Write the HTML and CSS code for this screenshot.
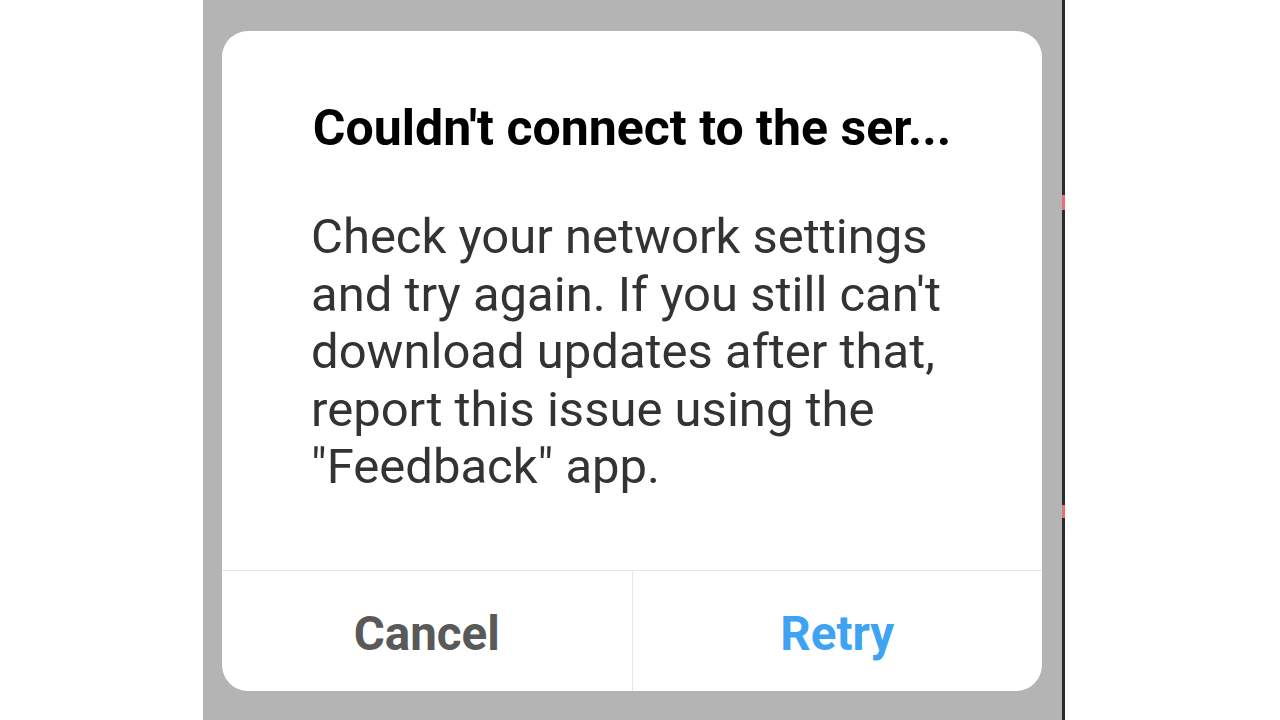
FILE: index.html
```html
<!DOCTYPE html>
<html lang="en">
<head>
<meta charset="utf-8">
<title>Couldn't connect</title>
<link rel="stylesheet" href="styles.css">
</head>
<body>
<div class="screen">
  <div class="margin-left"></div>
  <div class="panel">
    <div class="dialog">
      <h1 class="title">Couldn't connect to the ser...</h1>
      <p class="message">Check your network settings and try again. If you still can't download updates after that, report this issue using the "Feedback" app.</p>
      <div class="actions">
        <button class="action cancel">Cancel</button>
        <button class="action retry">Retry</button>
      </div>
    </div>
  </div>
  <div class="edge">
    <span class="mark mark-a"></span>
    <span class="mark mark-b"></span>
  </div>
  <div class="margin-right"></div>
</div>
</body>
</html>
```
FILE: styles.css
```css
html, body {
  margin: 0;
  padding: 0;
  background: #ffffff;
}
.screen {
  display: flex;
  width: 1280px;
  height: 720px;
  overflow: hidden;
  font-family: Roboto, "Noto Sans", sans-serif;
}
.margin-left {
  width: 203px;
  flex: none;
  background: #ffffff;
}
.panel {
  width: 859px;
  flex: none;
  background: #b4b4b4;
  padding: 31px 0 0 19px;
  box-sizing: border-box;
}
.dialog {
  width: 820px;
  height: 660px;
  background: #ffffff;
  border-radius: 26px;
  display: flex;
  flex-direction: column;
  overflow: hidden;
}
.title {
  margin: 67px 0 0;
  font-size: 50px;
  line-height: 60px;
  font-weight: 700;
  color: #000000;
  text-align: center;
}
.message {
  margin: 50px 0 0;
  padding: 0 80px 0 89px;
  font-size: 49px;
  line-height: 57.5px;
  color: #333333;
}
.actions {
  margin-top: auto;
  height: 120px;
  display: flex;
  border-top: 1px solid #e6e6e6;
}
.action {
  flex: 1;
  border: none;
  background: transparent;
  font-family: Roboto, "Noto Sans", sans-serif;
  font-size: 47.5px;
  font-weight: 700;
  padding: 5px 0 0;
  margin: 0;
}
.cancel {
  color: #595959;
  border-right: 1px solid #e6e6e6;
}
.retry {
  color: #3ea3f2;
}
.edge {
  width: 3px;
  flex: none;
  background: #2a2a2e;
  position: relative;
}
.mark {
  position: absolute;
  left: 0;
  width: 3px;
  background: #e8707a;
}
.mark-a { top: 195px; height: 15px; }
.mark-b { top: 505px; height: 13px; }
.margin-right {
  flex: 1;
  background: #ffffff;
}
```
